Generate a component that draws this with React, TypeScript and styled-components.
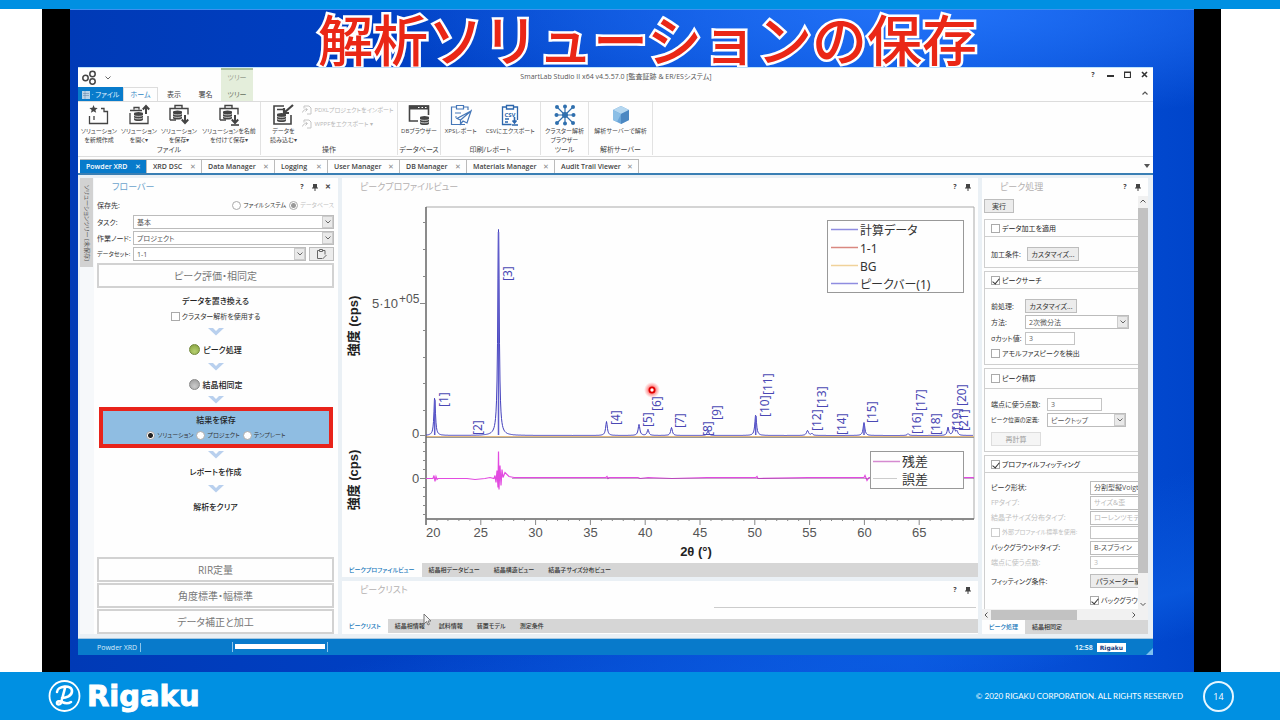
import React from "react";
import styled, { createGlobalStyle, css } from "styled-components";

const ui = '"Open Sans", "Noto Sans CJK JP", sans-serif';

const GlobalStyle = createGlobalStyle`
  * { box-sizing: border-box; }
  body { margin: 0; font-family: ${ui}; font-size: 7px; line-height: 9px; color: #333; background: #fff; }
  button, input, select { font: inherit; color: inherit; margin: 0; }
  h1, h2, p { margin: 0; font-weight: 400; }
`;

/* ---------- slide ---------- */

const Slide = styled.div`
  min-height: 100vh;
  display: flex;
  flex-direction: column;
  overflow: hidden;
`;

const TopBand = styled.div`
  height: 9px;
  background: #0090e2;
`;

const Stage = styled.main`
  flex: 1;
  display: flex;
  margin: 0 59px 0 42px;
  padding: 0 27px 0 28px;
  background: #000;
`;

const Desktop = styled.div`
  flex: 1;
  min-width: 0;
  display: flex;
  flex-direction: column;
  padding: 0 41px 17px 8px;
  border-top: 1px solid #3f8ff0;
  background:
    radial-gradient(ellipse 560px 110px at 76% 0, #2272f8 0, rgba(34, 114, 248, 0) 100%),
    linear-gradient(167deg, rgba(0, 60, 190, 0) 78%, rgba(10, 92, 225, 0.7) 91%, rgba(0, 60, 190, 0) 96%),
    linear-gradient(90deg, #003ab6 0, #0040c4 30%, #0a58e0 75%, #0045cb 100%);
`;

const Caption = styled.h1`
  height: 57px;
  padding-left: 64px;
  text-align: center;
  white-space: nowrap;
  font-family: "Noto Sans CJK JP", sans-serif;
  font-weight: 500;
  font-size: 55px;
  line-height: 54px;
  color: #ea2716;
  -webkit-text-stroke: 5px #fff;
  paint-order: stroke fill;
`;

const Footer = styled.footer`
  height: 48px;
  display: flex;
  align-items: center;
  padding: 0 46px 0 48px;
  background: #0090e2;
  color: #fff;
`;

const Brand = styled.div`
  flex: 1;
  display: flex;
  align-items: center;
  gap: 6px;
  font-family: "DejaVu Sans", sans-serif;
  font-weight: 700;
  font-size: 29px;
  line-height: 32px;
  -webkit-text-stroke: 1px #fff;
`;

const Copyright = styled.p`
  margin-right: 20px;
  font-family: Lato, sans-serif;
  font-size: 8px;
  line-height: 12px;
`;

const PageNumber = styled.div`
  width: 31px;
  height: 31px;
  border: 2px solid #e6f6ff;
  border-radius: 50%;
  text-align: center;
  font-size: 9px;
  line-height: 28px;
`;

/* ---------- application window ---------- */

const Window = styled.section`
  flex: 1;
  display: flex;
  flex-direction: column;
  background: #fefefe;
  border-top: 1px solid #bfe3fa;
  font-feature-settings: "palt";
`;

const Head = styled.div`
  display: grid;
  grid-template-columns: 143px 32px 1fr 70px;
  grid-template-rows: 19px 14px;
  border-bottom: 1px solid #dcdcdc;
`;

const QuickAccess = styled.div`
  display: flex;
  align-items: center;
  gap: 8px;
  padding-left: 4px;
`;

const ContextTitle = styled.div`
  border-top: 2px solid #a9c09b;
  background: #e4eedb;
  color: #98a08f;
  text-align: center;
  line-height: 16px;
`;

const WindowTitle = styled.h2`
  padding-right: 104px;
  text-align: center;
  font-size: 7px;
  line-height: 18px;
  color: #555;
`;

const WindowButtons = styled.div`
  display: flex;
  align-items: center;
  justify-content: space-between;
  padding: 0 5px 6px 6px;
`;

const BareButton = styled.button`
  display: flex;
  align-items: center;
  justify-content: center;
  min-width: 8px;
  padding: 0;
  border: 0;
  background: none;
  font-size: 7px;
  line-height: 8px;
  font-weight: 700;
  color: #444;
`;

const RibbonTabs = styled.nav`
  display: flex;
`;

const RibbonTab = styled.button<{ $kind?: "file" | "active" | "context"; $w: number }>`
  width: ${(p) => p.$w}px;
  height: 14px;
  padding: 0;
  display: flex;
  align-items: center;
  justify-content: center;
  gap: 2px;
  border: 1px solid transparent;
  border-bottom: 0;
  background: none;
  white-space: nowrap;
  color: #444;
  ${(p) => p.$kind === "file" && css`background: #087bcb; color: #e4f3ff;`}
  ${(p) => p.$kind === "active" && css`border-color: #ddd; color: #2f86c4;`}
  ${(p) => p.$kind === "context" && css`background: #e4eedb; color: #66705e;`}
`;

const Ribbon = styled.div`
  display: flex;
  height: 55px;
  border-bottom: 1px solid #dedede;
  color: #444;
`;

const Group = styled.div<{ $w: number }>`
  width: ${(p) => p.$w}px;
  display: flex;
  flex-direction: column;
  margin-bottom: 1px;
  border-right: 1px solid #e2e2e2;
`;

const GroupBody = styled.div`
  flex: 1;
  min-height: 0;
  display: flex;
  justify-content: center;
`;

const GroupName = styled.div`
  text-align: center;
  line-height: 10px;
`;

const Tool = styled.button<{ $w: number }>`
  width: ${(p) => p.$w}px;
  display: flex;
  flex-direction: column;
  align-items: center;
  padding: 2px 0 0;
  border: 0;
  background: none;
  font-size: 6px;
  line-height: 9px;
  white-space: nowrap;
  svg { flex: none; margin-bottom: 1px; }
`;

const SideTools = styled.div`
  display: flex;
  flex-direction: column;
  gap: 4px;
  padding-top: 3px;
`;

const SideTool = styled.button`
  display: flex;
  align-items: center;
  gap: 1px;
  padding: 0;
  border: 0;
  background: none;
  font-size: 6px;
  line-height: 10px;
  color: #b8b8b8;
  white-space: nowrap;
`;

const DocTabs = styled.nav`
  display: flex;
  height: 18px;
  padding: 2px 2px 0;
  border-bottom: 2px solid #3a7fb4;
`;

const DocTab = styled.button<{ $w: number; $active?: boolean }>`
  width: ${(p) => p.$w}px;
  display: flex;
  align-items: center;
  justify-content: space-between;
  padding: 0 5px 0 6px;
  border: 1px solid #bbb;
  border-width: 1px 1px 0 0;
  background: ${(p) => (p.$active ? "#087bcb" : "#fefefe")};
  color: ${(p) => (p.$active ? "#fff" : "#444")};
  font-weight: 600;
  white-space: nowrap;
  span { font-weight: 400; color: ${(p) => (p.$active ? "#fff" : "#888")}; }
`;

const Grow = styled.div`
  flex: 1;
`;

const Workspace = styled.div`
  flex: 1;
  display: flex;
  padding: 3px 5px 4px 2px;
  background: #eaf0f5;
  border-bottom: 1px solid #a8c8e0;
`;

const SideStrip = styled.div`
  width: 14px;
  background: #f6f8fa;
`;

const SideTab = styled.button`
  width: 13px;
  height: 89px;
  padding: 0 1px;
  border: 0;
  background: #d2d2d2;
  color: #555;
  writing-mode: vertical-rl;
  text-orientation: sideways;
  white-space: nowrap;
  font-size: 6px;
  line-height: 11px;
`;

const Panel = styled.section<{ $w?: number }>`
  ${(p) => (p.$w ? css`width: ${p.$w}px;` : css`flex: 1; min-width: 0;`)}
  display: flex;
  flex-direction: column;
  background: #fefefe;
`;

const PanelHead = styled.header<{ $tone?: string }>`
  display: flex;
  align-items: center;
  gap: 5px;
  height: 18px;
  padding: 0 6px 0 18px;
  font-size: 9px;
  line-height: 16px;
  color: ${(p) => p.$tone || "#b4b0b0"};
`;

const FlowBody = styled.div`
  flex: 1;
  display: flex;
  flex-direction: column;
  padding: 0 4px 0 3px;
`;

const Steps = styled.div`
  padding-top: 3px;
`;

const FormRow = styled.div<{ $h?: number }>`
  display: flex;
  align-items: center;
  height: ${(p) => p.$h || 16}px;
  gap: 3px;
  white-space: nowrap;
`;

const Label = styled.label<{ $w?: number; $dim?: boolean; $small?: boolean }>`
  ${(p) => p.$w && css`width: ${p.$w}px;`}
  ${(p) => p.$small && css`font-size: 6px;`}
  flex: none;
  display: flex;
  align-items: center;
  gap: 2px;
  white-space: nowrap;
  color: ${(p) => (p.$dim ? "#c0c0c0" : "#333")};
`;

const Radio = styled.input.attrs({ type: "radio" })`
  appearance: none;
  flex: none;
  width: 9px;
  height: 9px;
  border: 1px solid #aaa;
  border-radius: 50%;
  background: #fff;
  &:checked { background: radial-gradient(circle, #222 0 2px, #fff 3px); }
  &:checked:disabled { background: radial-gradient(circle, #999 0 2px, #fff 3px); }
`;

const Check = styled.input.attrs({ type: "checkbox" })`
  appearance: none;
  flex: none;
  display: grid;
  place-items: center;
  width: 9px;
  height: 9px;
  border: 1px solid #aaa;
  background: #fff;
  &:disabled { border-color: #ccc; }
  &:checked::after {
    content: "";
    width: 3px;
    height: 6px;
    margin-bottom: 2px;
    border: solid #333;
    border-width: 0 1px 1px 0;
    rotate: 40deg;
  }
`;

const SelectBox = styled.div<{ $w?: number }>`
  ${(p) => (p.$w ? css`width: ${p.$w}px; flex: none;` : css`flex: 1; min-width: 0;`)}
  display: flex;
  height: 14px;
  border: 1px solid #bcbcbc;
  background: #fff;
  select {
    flex: 1;
    min-width: 0;
    appearance: none;
    border: 0;
    padding: 0 3px;
    background: none;
    color: #555;
    line-height: 11px;
  }
  select:disabled { color: #bbb; opacity: 1; }
`;

const Arrow = styled.span`
  width: 11px;
  display: grid;
  place-items: center;
  border: 1px solid #ccc;
  background: #e9e9e9;
`;

const TextBox = styled.input<{ $w: number }>`
  width: ${(p) => p.$w}px;
  flex: none;
  height: 13px;
  padding: 0 3px;
  border: 1px solid #c4c4c4;
  background: #fff;
  color: #666;
  &:disabled { color: #bbb; }
`;

const SmallButton = styled.button<{ $w: number; $dim?: boolean }>`
  width: ${(p) => p.$w}px;
  flex: none;
  height: 14px;
  padding: 0;
  display: flex;
  align-items: center;
  justify-content: center;
  border: 1px solid ${(p) => (p.$dim ? "#ddd" : "#bdbdbd")};
  background: ${(p) => (p.$dim ? "#f5f5f5" : "#ececec")};
  color: ${(p) => (p.$dim ? "#999" : "#333")};
  white-space: nowrap;
`;

const StageButton = styled.button`
  height: 25px;
  margin-top: 1px;
  border: 2px solid #d2d2d2;
  background: #fefefe;
  color: #777;
  font-size: 10px;
  line-height: 20px;
`;

const Step = styled.div`
  display: flex;
  align-items: center;
  justify-content: center;
  gap: 3px;
  height: 18px;
  font-size: 8px;
  font-weight: 500;
  color: #222;
`;

const SubStep = styled(Step)`
  height: 14px;
  font-size: 7px;
  font-weight: 400;
`;

const Lamp = styled.i<{ $on?: boolean }>`
  width: 11px;
  height: 11px;
  border: 1px solid ${(p) => (p.$on ? "#71883a" : "#888")};
  border-radius: 50%;
  background: radial-gradient(circle at 50% 70%, ${(p) => (p.$on ? "#b6d070, #86a03e" : "#ccc, #999")});
`;

const Chevron = styled.div<{ $short?: boolean }>`
  display: grid;
  place-items: center;
  height: ${(p) => (p.$short ? 14 : 17)}px;
`;

const CurrentStep = styled.div`
  height: 41px;
  margin: 0 1px 0 2px;
  padding-bottom: 1px;
  border: 4px solid #e8231a;
  background: #8fbde2;
  div { height: 16px; }
`;

const BottomTabs = styled.nav`
  display: flex;
  height: 14px;
  background: #d6d6d6;
`;

const BottomTab = styled.button<{ $active?: boolean }>`
  padding: 0 7px;
  border: 0;
  background: ${(p) => (p.$active ? "#fefefe" : "none")};
  color: ${(p) => (p.$active ? "#1677ba" : "#333")};
  font-size: 6px;
  font-weight: 500;
  white-space: nowrap;
`;

const ChartArea = styled.div`
  flex: 1;
  svg { display: block; width: 100%; }
`;

const Center = styled.div`
  flex: 1;
  min-width: 0;
  display: flex;
  flex-direction: column;
  margin: 0 4px;
  gap: 4px;
`;

const ListPanel = styled.section`
  background: #fefefe;
  padding-bottom: 1px;
`;

const ListBody = styled.div`
  position: relative;
  height: 20px;
  padding: 8px 2px 0 0;
  svg.pointer { position: absolute; left: 81px; top: 14px; }
`;

const ListEdge = styled.div`
  width: 262px;
  margin-left: auto;
  border-top: 1px solid #ccc;
`;

const ScrollBody = styled.div`
  flex: 1;
  display: flex;
  min-height: 0;
`;

const Settings = styled.div`
  flex: 1;
  min-width: 0;
  overflow: hidden;
  padding-left: 2px;
  display: flex;
  flex-direction: column;
  gap: 3px;
`;

const Box = styled.fieldset<{ $h?: number }>`
  min-width: 0;
  margin: 0;
  padding: 0;
  border: 1px solid #cfcfcf;
  border-right: 0;
  ${(p) => (p.$h ? css`height: ${p.$h}px;` : css`flex: 1; border-bottom: 0;`)}
  overflow: hidden;
`;

const BoxHead = styled.div<{ $h?: number }>`
  height: ${(p) => p.$h || 17}px;
  display: flex;
  align-items: center;
  padding-left: 6px;
  border-bottom: 1px solid #cfcfcf;
  label { color: #222; }
`;

const BoxBody = styled.div<{ $top: number }>`
  padding: ${(p) => p.$top}px 0 0 6px;
`;

const VScroll = styled.div`
  width: 10px;
  display: flex;
  flex-direction: column;
  align-items: center;
  justify-content: space-between;
  background: #f1f1f1;
  i { width: 10px; height: 365px; margin-bottom: 24px; background: #c2c2c2; }
`;

const HScroll = styled.div`
  height: 11px;
  display: flex;
  align-items: center;
  justify-content: space-between;
  padding: 0 12px 0 2px;
  background: #f1f1f1;
  i { width: 86px; height: 10px; margin: 0 auto 0 3px; background: #c2c2c2; }
`;

const Status = styled.footer`
  height: 16px;
  display: flex;
  align-items: center;
  padding: 0 0 0 19px;
  background: #087acb;
  color: #d8ecfa;
`;

const StatusName = styled.span`
  width: 44px;
  border-right: 1px solid #8cc4ea;
  white-space: nowrap;
`;

const StatusBar = styled.div`
  width: 96px;
  height: 10px;
  margin-left: 91px;
  padding: 2px 2px 3px;
  border: solid #8cc4ea;
  border-width: 0 1px;
  &::after { content: ""; display: block; height: 5px; background: #fff; }
`;

const StatusLogo = styled.span`
  margin: 0 20px 0 4px;
  padding: 0 3px;
  background: #fff;
  color: #1b3c7a;
  font-family: "DejaVu Sans", sans-serif;
  font-weight: 700;
  font-size: 6px;
  line-height: 9px;
`;

const Grip = styled.svg`
  align-self: flex-end;
`;

/* ---------- icons ---------- */

const Down = () => (
  <svg width="6" height="4" viewBox="0 0 6 4" fill="none" stroke="#666"><path d="M.5.5 3 3 5.5.5" /></svg>
);

const Pin = () => (
  <svg width="6" height="7" viewBox="0 0 6 7" fill="#444"><path d="M1 0h4v3.6h1v1H3.5V7h-1V4.6H0v-1h1z" /></svg>
);

const StepArrow = ({ short }: { short?: boolean }) => (
  <Chevron $short={short}>
    <svg width="16" height="8" viewBox="0 0 16 8"><path d="M0 0h5l3 3 3-3h5L8 7.5z" fill="#b9d0ee" /></svg>
  </Chevron>
);

const ToolIcon = ({ children, color = "#444" }: { children: React.ReactNode; color?: string }) => (
  <svg width="22" height="22" viewBox="0 0 22 22" fill="none" stroke={color} strokeWidth="1.6">{children}</svg>
);

const Drum = ({ x, y }: { x: number; y: number }) => (
  <g transform={`translate(${x} ${y})`}>
    <path d="M0 1.5v6c0 2 9 2 9 0v-6z" fill="#444" stroke="none" />
    <ellipse cx="4.5" cy="1.5" rx="4.5" ry="1.5" fill="#444" stroke="none" />
    <path d="M0 3c0 1.800 9 1.800 9 0M0 5.500c0 1.800 9 1.800 9 0" stroke="#fff" strokeWidth=".7" />
  </g>
);

const NewIcon = () => (
  <ToolIcon>
    <path d="M1.500 12v7.500h18V7.500H16V4.500h-3M6 12v4" strokeWidth="1.300" />
    <path d="m5.500 1 1.200 2.800 3 .2-2.300 1.900.8 2.900-2.700-1.600-2.600 1.600.8-2.900L1.400 4l3-.2z" fill="#444" stroke="none" />
  </ToolIcon>
);

const OpenIcon = () => (
  <ToolIcon>
    <path d="M6 5.500V3.500h5v2M2 9v10.500h18V12M2 6.500h12" strokeWidth="1.300" />
    <Drum x={6} y={8} />
    <path d="M18 10V2.500M14.800 5.500 18 2l3.200 3.500" strokeWidth="2" />
  </ToolIcon>
);

const SaveIcon = ({ bar }: { bar?: boolean }) => (
  <ToolIcon>
    <path d="M7 4V1.500h7V4M2 16V4.500h18v6M2 16h6" strokeWidth="1.400" />
    <Drum x={5} y={6.5} />
    <path d="M17 11v7M13.800 15.500 17 19l3.200-3.500" strokeWidth="2" />
    {bar && <path d="M13 21h8" />}
  </ToolIcon>
);

const LoadIcon = () => (
  <ToolIcon>
    <path d="M12 2H2v18h17V11M5 5.500h6" />
    <Drum x={5} y={9} />
    <path d="m21 1-8 7M12 4v5h5" strokeWidth="2.200" />
  </ToolIcon>
);

const BrowserIcon = () => (
  <ToolIcon>
    <path d="M10 17H1.500V2h19v9" />
    <path d="M1 1.500h20v4H1z" fill="#444" stroke="none" />
    <path d="M10 3.500h1.500M13.500 3.500H15M17 3.500h1.500" stroke="#fff" strokeWidth="1.200" />
    <Drum x={12} y={12} />
  </ToolIcon>
);

const XpsIcon = () => (
  <ToolIcon color="#4577b8">
    <path d="M6 3H1.500v17.500H15M14 3h4v3M6.500 1.500h7V5h-7zM5 9h6M5 13h2" strokeWidth="1.200" />
    <path d="M21 7 7 14.500l3.500 1.500L21 7l-4 12-4-2-2.500 3v-4" strokeWidth="1.200" />
  </ToolIcon>
);

const CsvIcon = () => (
  <ToolIcon color="#2d67ad">
    <path d="M7 3H3.500v17.500h9M15 3h3.500v13M7.500 1.500h7V5h-7zM6 15h4M6 18h3" strokeWidth="1.300" />
    <text x="11" y="12.500" textAnchor="middle" fontSize="6" fontWeight="700" fill="#2d67ad" stroke="none">CSV</text>
    <path d="M15.500 13v5M13 21h6M13.500 16.500l2 2.500 2-2.500" />
  </ToolIcon>
);

const ClusterIcon = () => (
  <ToolIcon color="#2f6fae">
    <path d="M11 2.500v17M2.500 11h17M4 4l14 14M18 4 4 18" strokeWidth="1.200" />
    <g fill="#2f6fae" stroke="none">
      {[[11, 2.5], [11, 19.5], [2.5, 11], [19.5, 11], [3, 3], [19, 3], [3, 19], [19, 19], [11, 11]].map(([x, y], i) => (
        <circle key={i} cx={x} cy={y} r={i === 8 ? 3 : 2} />
      ))}
    </g>
  </ToolIcon>
);

const CubeIcon = () => (
  <svg width="22" height="22" viewBox="0 0 22 22">
    <path d="m11 2 8 4v10l-8 4-8-4V6z" fill="#6aa5d8" />
    <path d="m11 2 8 4-8 4-8-4z" fill="#b5d7f0" />
    <path d="m11 10 8-4v10l-8 4z" fill="#4c88c2" />
    <path d="m3 6 8 4-4 8-4-2z" fill="#8cbfe6" />
  </svg>
);

const ExportIcon = () => (
  <svg width="11" height="10" viewBox="0 0 11 10" fill="none" stroke="#c4c4c4"><path d="M2 3.500V1h5l2 2v6H5" /><path d="M.5 7.500C1 5 3 4.500 5 4.500M3.500 3 5.500 4.500 3.500 6.500" /></svg>
);

const AppIcon = () => (
  <svg width="15" height="15" viewBox="0 0 15 15" fill="none" stroke="#444" strokeWidth="1.500"><circle cx="3.500" cy="8" r="2.700" /><circle cx="10.500" cy="4" r="2.700" /><circle cx="10.500" cy="11.500" r="2.700" /></svg>
);

/* ---------- chart ---------- */

const xOf = (deg: number) => 426 + (deg - 20) * 10.96;

const peaks: [number, number, number][] = [
  [434.7, 39, 0.9], [498.5, 206, 0.9], [606.5, 14, 1], [639, 11, 1], [648, 6, 1], [671.5, 8, 1],
  [708, 5, 1], [755.7, 21, 1], [807.5, 5, 1.2], [812, 2, 1], [864, 13, 1], [908, 2, 1], [948, 8, 0.9], [954, 8, 1.2], [957, 4, 1],
];

const profile = (() => {
  const pts: string[] = [];
  for (let x = 426; x <= 973; x += 0.5) {
    const h = peaks.reduce((s, [c, a, w]) => s + a / (1 + ((x - c) / w) ** 2), 0);
    pts.push(`${x},${(435.5 - h).toFixed(1)}`);
  }
  return pts.join(" ");
})();

const labels: [number, number, number][] = [
  [1, 448, 407], [2, 482, 435], [3, 512, 281], [4, 620, 425], [5, 652, 427], [6, 661, 411], [7, 684, 428],
  [8, 712, 436], [9, 721, 420], [10, 769, 417], [11, 772, 395], [12, 821, 431], [13, 826, 408], [14, 846, 435],
  [15, 876, 423], [16, 921, 434], [17, 925, 411], [18, 940, 435], [19, 961, 430], [20, 966, 406], [21, 968, 431],
];

const Axis = styled.g`
  font-family: "Liberation Sans", "Noto Sans CJK JP", sans-serif;
  font-size: 13px;
  fill: #555;
`;

const AxisTitle = styled.text`
  font-weight: 700;
  font-size: 13px;
  fill: #222;
`;

const PeakLabels = styled.g`
  font-family: "Noto Sans", sans-serif;
  font-size: 12px;
  fill: #4a48b4;
`;

const Legend = styled.g<{ $size: number }>`
  font-family: "Noto Sans", "Noto Sans CJK JP", sans-serif;
  font-size: ${(p) => p.$size}px;
  fill: #333;
`;

const Chart = () => (
  <svg viewBox="342 196 636 365" role="img" aria-label="ピークプロファイル">
    <defs>
      <radialGradient id="glow">
        <stop offset="0.3" stopColor="#f33" stopOpacity=".8" />
        <stop offset="1" stopColor="#f66" stopOpacity="0" />
      </radialGradient>
    </defs>
    <path d="M426 207H974V519" fill="none" stroke="#aaa" />
    <path d="M426 437.500H974" stroke="#999" />
    <path d="M426 436.500H974" stroke="#e6bb80" />
    <path d="M426 207V525M426 519H974" fill="none" stroke="#666" strokeWidth="1.500" />
    <g stroke="#888">
      {Array.from({ length: 50 }, (_, i) => (
        <path key={i} d={`M${xOf(20 + i)} 519v${i % 5 ? 2 : 6}`} />
      ))}
      {[222, 249, 276, 330, 357, 383, 410, 442, 451, 460, 469, 487, 496, 505, 514].map((y) => (
        <path key={y} d={`M423 ${y}.5h3`} />
      ))}
      <path d="M420 303.500h6M420 435.500h6M420 478.500h6" />
    </g>
    <Axis>
      {[25, 30, 35, 40, 45, 50, 55, 60, 65].map((d) => (
        <text key={d} x={xOf(d)} y="537" textAnchor="middle">{d}</text>
      ))}
      <text x="426" y="537">20</text>
      <text x="412" y="438">0</text>
      <text x="412" y="483">0</text>
      <text x="372" y="308">5·10</text>
      <text x="399" y="303" fontSize="12">+05</text>
      <AxisTitle x="696" y="556" textAnchor="middle">2θ (°)</AxisTitle>
      <AxisTitle transform="translate(358 326) rotate(-90)" textAnchor="middle">強度 (cps)</AxisTitle>
      <AxisTitle transform="translate(358 480) rotate(-90)" textAnchor="middle">強度 (cps)</AxisTitle>
    </Axis>
    <polyline points={profile} fill="none" stroke="#4340bd" />
    <path d="M498.500 435V232M434.700 435V400M755.700 435V416M864 435V424" stroke="#5f5ccb" strokeWidth="1.500" />
    <path
      d="M426 478.500h7l1-3 1 6 1-5 1 3 1-1h29l8 1 10-1 5-1 4 1 1-3 1 7 1-12 1 17 .5-36 .5 38 1-24 1 20 1-16 1 8 2-5 4 4 5 1H606l1-1 1 2 1-1h29l2 1 8-1 24 1 35-1h49l1-1 1 2 50-1h56l1-2 2 5 2-3H974"
      fill="none" stroke="#e24be0" strokeWidth="1.200"
    />
    <path d="M512 478.500H974" stroke="#8d3f93" strokeWidth=".7" opacity=".7" />
    <PeakLabels>
      {labels.map(([n, x, y]) => (
        <text key={n} transform={`translate(${x} ${y}) rotate(-90)`}>{`[${n}]`}</text>
      ))}
    </PeakLabels>
    <Legend $size={12}>
      <rect x="827.500" y="220.500" width="136" height="72" fill="#fefefe" stroke="#999" />
      {[["計算データ", "#8f8ce0"], ["1-1", "#d98880"], ["BG", "#f0d29a"], ["ピークバー(1)", "#8f8ce0"]].map(([t, c], i) => (
        <g key={t}>
          <path d={`M831 ${229.5 + i * 18}h27`} stroke={c} strokeWidth="1.500" />
          <text x="860" y={235 + i * 18}>{t}</text>
        </g>
      ))}
    </Legend>
    <Legend $size={13}>
      <rect x="870.500" y="451.500" width="93" height="37" fill="#fefefe" stroke="#999" />
      <path d="M873 461.500h27" stroke="#d58ad0" strokeWidth="1.500" />
      <path d="M873 478.500h24" stroke="#ccc" />
      <text x="902" y="466">残差</text>
      <text x="902" y="484">誤差</text>
    </Legend>
    <circle cx="652" cy="390" r="8" fill="url(#glow)" />
    <circle cx="652" cy="390" r="2.600" fill="#fff" stroke="#e00000" strokeWidth="1.800" />
  </svg>
);

/* ---------- shared pieces ---------- */

const PanelTitle = ({ text, tone, closable }: { text: string; tone?: string; closable?: boolean }) => (
  <PanelHead $tone={tone}>
    {text}
    <Grow />
    <BareButton aria-label="ヘルプ">?</BareButton>
    <BareButton aria-label="固定"><Pin /></BareButton>
    {closable && <BareButton aria-label="閉じる">✕</BareButton>}
  </PanelHead>
);

const Picker = ({ id, value, w, dim }: { id: string; value: string; w?: number; dim?: boolean }) => (
  <SelectBox $w={w}>
    <select id={id} disabled={dim}><option>{value}</option></select>
    <Arrow><Down /></Arrow>
  </SelectBox>
);

const TabStrip = ({ items }: { items: string[] }) => (
  <BottomTabs>
    {items.map((t, i) => <BottomTab key={t} $active={i === 0}>{t}</BottomTab>)}
  </BottomTabs>
);

/* ---------- sections ---------- */

const RibbonArea = () => (
  <Ribbon>
    <Group $w={183}>
      <GroupBody>
        <Tool $w={40}><NewIcon />ソリューション<br />を新規作成</Tool>
        <Tool $w={40}><OpenIcon />ソリューション<br />を開く▾</Tool>
        <Tool $w={40}><SaveIcon />ソリューション<br />を保存▾</Tool>
        <Tool $w={60}><SaveIcon bar />ソリューションを名前<br />を付けて保存▾</Tool>
      </GroupBody>
      <GroupName>ファイル</GroupName>
    </Group>
    <Group $w={137}>
      <GroupBody>
        <Tool $w={38}><LoadIcon />データを<br />読み込む▾</Tool>
        <SideTools>
          <SideTool disabled><ExportIcon />PDXLプロジェクトをインポート</SideTool>
          <SideTool disabled><ExportIcon />WPPFをエクスポート ▾</SideTool>
        </SideTools>
      </GroupBody>
      <GroupName>操作</GroupName>
    </Group>
    <Group $w={43}>
      <GroupBody><Tool $w={42}><BrowserIcon />DBブラウザー</Tool></GroupBody>
      <GroupName>データベース</GroupName>
    </Group>
    <Group $w={100}>
      <GroupBody>
        <Tool $w={40}><XpsIcon />XPSレポート</Tool>
        <Tool $w={60}><CsvIcon />CSVにエクスポート</Tool>
      </GroupBody>
      <GroupName>印刷/レポート</GroupName>
    </Group>
    <Group $w={48}>
      <GroupBody><Tool $w={46}><ClusterIcon />クラスター解析<br />ブラウザー</Tool></GroupBody>
      <GroupName>ツール</GroupName>
    </Group>
    <Group $w={64}>
      <GroupBody><Tool $w={62}><CubeIcon />解析サーバーで解析</Tool></GroupBody>
      <GroupName>解析サーバー</GroupName>
    </Group>
  </Ribbon>
);

const docTabs: [string, number][] = [
  ["Powder XRD", 67], ["XRD DSC", 55], ["Data Manager", 73], ["Logging", 53],
  ["User Manager", 72], ["DB Manager", 67], ["Materials Manager", 88], ["Audit Trail Viewer", 84],
];

const FlowPanel = () => (
  <Panel $w={244}>
    <PanelTitle text="フローバー" tone="#6ba3cd" closable />
    <FlowBody>
      <FormRow $h={18}>
        保存先:
        <Grow />
        <Label $small><Radio name="dest" disabled />ファイルシステム</Label>
        <Label $small $dim><Radio name="dest" defaultChecked disabled />データベース</Label>
      </FormRow>
      <FormRow><Label $w={33} htmlFor="task">タスク:</Label><Picker id="task" value="基本" /></FormRow>
      <FormRow><Label $w={33} htmlFor="node">作業ノード:</Label><Picker id="node" value="プロジェクト" /></FormRow>
      <FormRow>
        <Label $w={33} $small htmlFor="set">データセット:</Label>
        <Picker id="set" value="1-1" />
        <SmallButton $w={25} aria-label="データセットを編集">
          <svg width="12" height="11" viewBox="0 0 12 11" fill="none" stroke="#666"><path d="M3 1.500H1.500v8H6M7 1.500h2v4M3.500.500h3v2h-3zM6.500 10l4-4" /></svg>
        </SmallButton>
      </FormRow>
      <StageButton>ピーク評価・相同定</StageButton>
      <Steps>
        <Step>データを置き換える</Step>
        <SubStep><Label><Check />クラスター解析を使用する</Label></SubStep>
        <StepArrow />
        <Step><Lamp $on />ピーク処理</Step>
        <StepArrow />
        <Step><Lamp />結晶相同定</Step>
        <StepArrow short />
        <CurrentStep>
          <Step>結果を保存</Step>
          <SubStep>
            <Label $small><Radio name="save" defaultChecked />ソリューション</Label>
            <Label $small><Radio name="save" />プロジェクト</Label>
            <Label $small><Radio name="save" />テンプレート</Label>
          </SubStep>
        </CurrentStep>
        <StepArrow short />
        <Step>レポートを作成</Step>
        <StepArrow />
        <Step>解析をクリア</Step>
      </Steps>
      <Grow />
      <StageButton>RIR定量</StageButton>
      <StageButton>角度標準・幅標準</StageButton>
      <StageButton>データ補正と加工</StageButton>
    </FlowBody>
  </Panel>
);

const SettingsPanel = () => (
  <Panel $w={166}>
    <PanelTitle text="ピーク処理" />
    <ScrollBody>
      <Settings>
        <FormRow $h={20}><SmallButton $w={30}>実行</SmallButton></FormRow>
        <Box $h={49}>
          <BoxHead><Label><Check />データ加工を適用</Label></BoxHead>
          <BoxBody $top={9}>
            <FormRow><Label $w={33}>加工条件:</Label><SmallButton $w={52}>カスタマイズ...</SmallButton></FormRow>
          </BoxBody>
        </Box>
        <Box $h={94}>
          <BoxHead><Label><Check defaultChecked />ピークサーチ</Label></BoxHead>
          <BoxBody $top={9}>
            <FormRow><Label $w={31}>前処理:</Label><SmallButton $w={52}>カスタマイズ...</SmallButton></FormRow>
            <FormRow><Label $w={31} htmlFor="method">方法:</Label><Picker id="method" value="2次微分法" w={104} /></FormRow>
            <FormRow><Label $w={31} htmlFor="sigma">σカット値:</Label><TextBox id="sigma" $w={50} defaultValue="3" /></FormRow>
            <FormRow $h={14}><Label><Check />アモルファスピークを検出</Label></FormRow>
          </BoxBody>
        </Box>
        <Box $h={84}>
          <BoxHead $h={20}><Label><Check />ピーク積算</Label></BoxHead>
          <BoxBody $top={7}>
            <FormRow><Label $w={53} htmlFor="ends">端点に使う点数:</Label><TextBox id="ends" $w={55} defaultValue="3" /></FormRow>
            <FormRow><Label $w={53} $small htmlFor="pos">ピーク位置の定義:</Label><Picker id="pos" value="ピークトップ" w={79} /></FormRow>
            <FormRow $h={22}><SmallButton $w={50} $dim>再計算</SmallButton></FormRow>
          </BoxBody>
        </Box>
        <Box>
          <BoxHead><Label><Check defaultChecked />プロファイルフィッティング</Label></BoxHead>
          <BoxBody $top={7}>
            <FormRow $h={15}><Label $w={96} htmlFor="shape">ピーク形状:</Label><Picker id="shape" value="分割型擬Voigt関数" w={90} /></FormRow>
            <FormRow $h={15}><Label $w={96} htmlFor="fp" $dim>FPタイプ:</Label><Picker id="fp" value="サイズ&歪" w={90} dim /></FormRow>
            <FormRow $h={15}><Label $w={96} htmlFor="dist" $dim>結晶子サイズ分布タイプ:</Label><Picker id="dist" value="ローレンツモデル" w={90} dim /></FormRow>
            <FormRow $h={15}><Label $w={96} $small $dim><Check disabled />外部プロファイル標準を使用:</Label><TextBox aria-label="外部プロファイル" $w={90} /></FormRow>
            <FormRow $h={15}><Label $w={96} htmlFor="bg">バックグラウンドタイプ:</Label><Picker id="bg" value="B-スプライン" w={90} /></FormRow>
            <FormRow $h={15}><Label $w={96} htmlFor="pts" $dim>端点に使う点数:</Label><TextBox id="pts" $w={90} defaultValue="3" disabled /></FormRow>
            <FormRow $h={22}><Label $w={96}>フィッティング条件:</Label><SmallButton $w={70}>パラメーター編集...</SmallButton></FormRow>
            <FormRow><Label $w={96} /><Label><Check defaultChecked />バックグラウンド</Label></FormRow>
          </BoxBody>
        </Box>
      </Settings>
      <VScroll>
        <svg width="6" height="10" viewBox="0 0 6 10" fill="none" stroke="#555"><path d="M.5 6.500 3 4l2.500 2.500" /></svg>
        <i />
        <svg width="6" height="10" viewBox="0 0 6 10" fill="none" stroke="#555"><path d="M.5 4 3 6.500 5.500 4" /></svg>
      </VScroll>
    </ScrollBody>
    <HScroll>
      <svg width="4" height="6" viewBox="0 0 4 6" fill="none" stroke="#555"><path d="M3.500.500 1 3l2.500 2.500" /></svg>
      <i />
      <svg width="4" height="6" viewBox="0 0 4 6" fill="none" stroke="#555"><path d="M.5.500 3 3 .5 5.500" /></svg>
    </HScroll>
    <TabStrip items={["ピーク処理", "結晶相同定"]} />
  </Panel>
);

export default function App() {
  return (
    <Slide>
      <GlobalStyle />
      <TopBand />
      <Stage>
        <Desktop>
          <Caption>解析ソリューションの保存</Caption>
          <Window>
            <Head>
              <QuickAccess>
                <AppIcon />
                <Down />
              </QuickAccess>
              <ContextTitle>ツリー</ContextTitle>
              <WindowTitle>SmartLab Studio II x64 v4.5.57.0 [監査証跡 &amp; ER/ESシステム]</WindowTitle>
              <WindowButtons>
                <BareButton aria-label="ヘルプ">?</BareButton>
                <BareButton aria-label="最小化"><svg width="7" height="7" viewBox="0 0 7 7"><path d="M0 4h7v2H0z" fill="#333" /></svg></BareButton>
                <BareButton aria-label="最大化"><svg width="7" height="7" viewBox="0 0 7 7"><path d="M.5 1.500h6v5h-6zM0 1h7" fill="none" stroke="#333" strokeWidth="1.200" /></svg></BareButton>
                <BareButton aria-label="閉じる"><svg width="7" height="7" viewBox="0 0 7 7"><path d="m1 1 5 5M6 1 1 6" stroke="#333" strokeWidth="1.600" /></svg></BareButton>
              </WindowButtons>
              <RibbonTabs>
                <RibbonTab $kind="file" $w={45}>
                  <svg width="8" height="8" viewBox="0 0 8 8"><path d="M0 0h8v8H0z" fill="#b9d3e8" /><path d="M1 2.500h6M1 4.500h6M3 0v8" stroke="#6b8cab" strokeWidth=".6" /></svg>
                  · ファイル
                </RibbonTab>
                <RibbonTab $kind="active" $w={35}>ホーム</RibbonTab>
                <RibbonTab $w={32}>表示</RibbonTab>
                <RibbonTab $w={31}>署名</RibbonTab>
              </RibbonTabs>
              <RibbonTab $kind="context" $w={32}>ツリー</RibbonTab>
              <Grow />
              <WindowButtons>
                <Grow />
                <svg width="6" height="12" viewBox="0 0 6 12" fill="none" stroke="#555" strokeWidth="1.200"><path d="M.5 9.500 3 7l2.500 2.500" /></svg>
              </WindowButtons>
            </Head>
            <RibbonArea />
            <DocTabs>
              {docTabs.map(([name, w], i) => (
                <DocTab key={name} $w={w} $active={i === 0}>{name}<span>✕</span></DocTab>
              ))}
              <Grow />
              <BareButton aria-label="タブ一覧"><svg width="6" height="4" viewBox="0 0 6 4"><path d="M0 0h6L3 4z" fill="#555" /></svg></BareButton>
            </DocTabs>
            <Workspace>
              <SideStrip><SideTab>ソリューションツリー [未保存]</SideTab></SideStrip>
              <FlowPanel />
              <Center>
                <Panel>
                  <PanelTitle text="ピークプロファイルビュー" />
                  <ChartArea><Chart /></ChartArea>
                  <TabStrip items={["ピークプロファイルビュー", "結晶相データビュー", "結晶構造ビュー", "結晶子サイズ分布ビュー"]} />
                </Panel>
                <ListPanel>
                  <PanelTitle text="ピークリスト" />
                  <ListBody>
                    <ListEdge />
                    <svg className="pointer" width="9" height="13" viewBox="0 0 9 13"><path d="M1 1v10l2.500-2.500L5 12l1.500-.7L5 8h3z" fill="#f4f4f4" stroke="#777" /></svg>
                  </ListBody>
                  <TabStrip items={["ピークリスト", "結晶相情報", "試料情報", "装置モデル", "測定条件"]} />
                </ListPanel>
              </Center>
              <SettingsPanel />
            </Workspace>
            <Status>
              <StatusName>Powder XRD</StatusName>
              <StatusBar />
              <Grow />
              <b>12:58</b>
              <StatusLogo>Rigaku</StatusLogo>
              <Grip width="7" height="7" viewBox="0 0 7 7"><path d="M7 0v7H0z" fill="#7cc0f0" /></Grip>
            </Status>
          </Window>
        </Desktop>
      </Stage>
      <Footer>
        <Brand>
          <svg width="33" height="34" viewBox="0 0 33 34" fill="none" stroke="#fff">
            <circle cx="16.500" cy="17" r="15" strokeWidth="1.800" />
            <path d="M9 13c0-6 15-8 15-1 0 5-6 7-10 7M17 9l-4 15c-.5 2-4 2-4 0 0-2 3-2 5-1 4 2 6 2 9 0" strokeWidth="2.600" strokeLinecap="round" />
          </svg>
          Rigaku
        </Brand>
        <Copyright>© 2020 RIGAKU CORPORATION. ALL RIGHTS RESERVED</Copyright>
        <PageNumber>14</PageNumber>
      </Footer>
    </Slide>
  );
}
